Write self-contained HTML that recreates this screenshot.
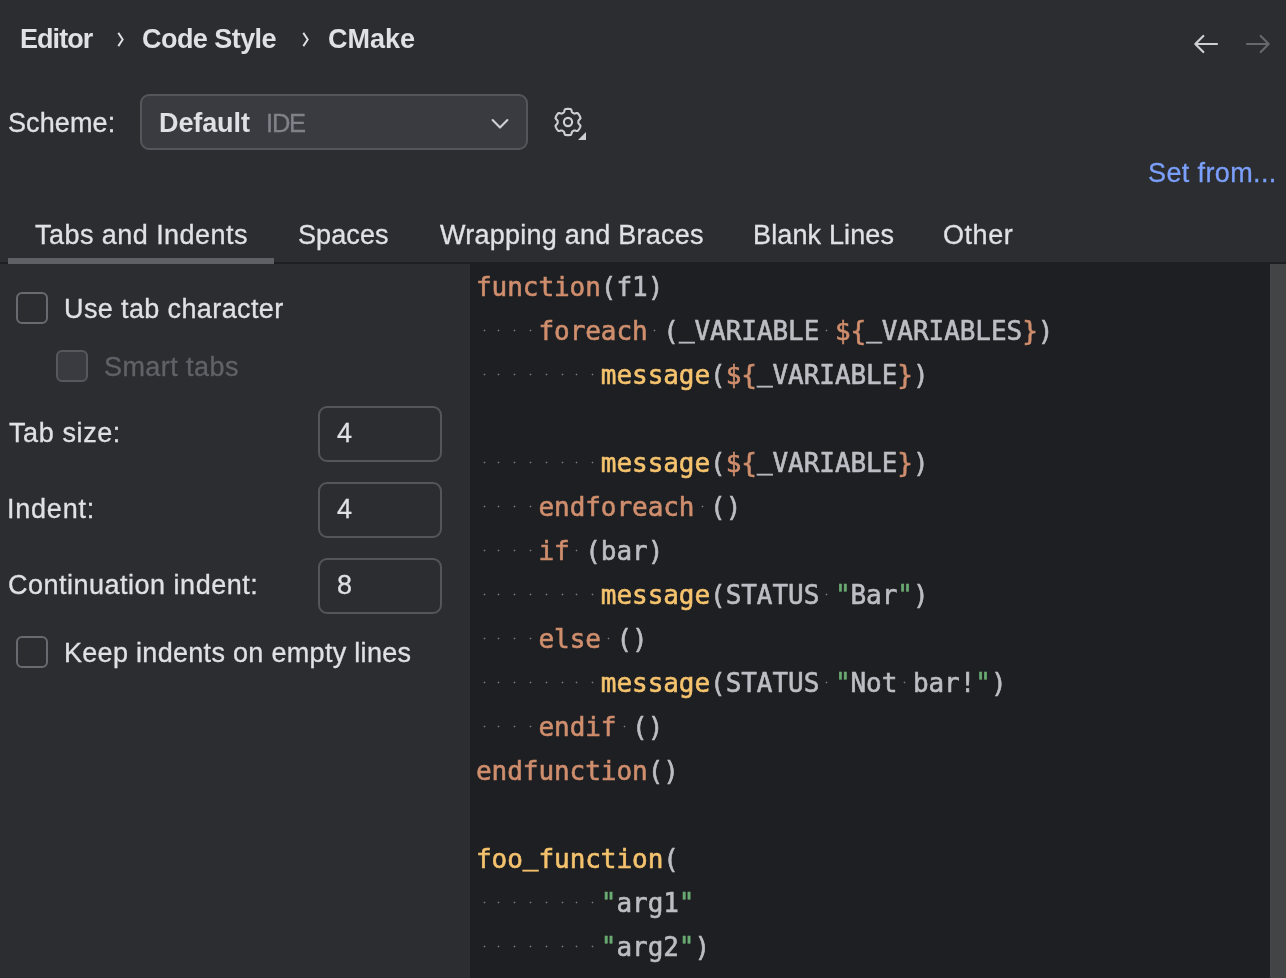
<!DOCTYPE html>
<html lang="en"><head><meta charset="utf-8"><title>Settings - Editor - Code Style - CMake</title>
<style>
html,body{margin:0;padding:0}
body{width:1286px;height:978px;overflow:hidden;background:#2B2D30;position:relative;font-family:"Liberation Sans",sans-serif;color:#DFE1E5}
.t{position:absolute;display:block;text-decoration:none;white-space:pre;line-height:1;margin:0;will-change:transform;-webkit-text-stroke:0.3px currentColor}
.abs{position:absolute}
#editor{position:absolute;left:470px;top:264px;width:816px;height:714px;background:#1E1F22;overflow:hidden}
#hline{position:absolute;left:0;top:262px;width:1286px;height:2px;background:#1E1F22}
#tabline{position:absolute;left:8px;top:258px;width:266px;height:6px;background:#5E6066}
#thumb{position:absolute;left:1270px;top:264px;width:16px;height:714px;background:#434446}
.cb{position:absolute;width:28px;height:28px;border:2px solid #676A70;border-radius:6px;box-sizing:content-box}
.cb.dis{border-color:#56585E;background:#393B40}
.in{position:absolute;width:120px;height:52px;border:2px solid #53565B;border-radius:9px}
#combo{position:absolute;left:140px;top:94px;width:384px;height:52px;border:2px solid #53565B;border-radius:9px;background:#393B40}
pre.ln{position:absolute;left:5.5px;margin:0;font-family:"DejaVu Sans Mono","Liberation Mono",monospace;font-size:26px;line-height:44px;height:44px;white-space:pre;color:#BCBEC4;letter-spacing:-0.05px;will-change:transform;-webkit-text-stroke:0.6px currentColor}
.k{color:#CF8E6D} .f{color:#F5C36E} .s{color:#6AAB73} .d{color:#BCBEC4}
i.dot{position:absolute;width:1px;height:1px;background:#777A82;box-shadow:1px 0 0 rgba(119,122,130,.3),-1px 0 0 rgba(119,122,130,.3),0 1px 0 rgba(119,122,130,.3),0 -1px 0 rgba(119,122,130,.3)}
.u{position:relative;top:-3px}
</style></head><body>
<header>
<span class="t" style="left:20.3px;top:26.14px;font-size:27px;font-weight:bold;-webkit-text-stroke:0;letter-spacing:-0.95px;">Editor</span>
<svg class="abs" style="left:115.2px;top:29px" width="14" height="22" viewBox="0 0 14 22"><path d="M3.3 3.9 L7.7 10.5 L3.3 17.1" fill="none" stroke="#DFE1E5" stroke-width="1.9" stroke-linejoin="miter"/></svg>
<span class="t" style="left:142.3px;top:26.14px;font-size:27px;font-weight:bold;-webkit-text-stroke:0;letter-spacing:-0.55px;">Code Style</span>
<svg class="abs" style="left:300.3px;top:29px" width="14" height="22" viewBox="0 0 14 22"><path d="M3.3 3.9 L7.7 10.5 L3.3 17.1" fill="none" stroke="#DFE1E5" stroke-width="1.9" stroke-linejoin="miter"/></svg>
<span class="t" style="left:328.3px;top:26.14px;font-size:27px;font-weight:bold;-webkit-text-stroke:0;">CMake</span>
<svg class="abs" style="left:1188px;top:30px" width="36" height="28" viewBox="0 0 36 28"><path d="M29 14 H7.3 M15.3 6 L7.3 14 L15.3 22" fill="none" stroke="#CED0D6" stroke-width="2.2" stroke-linecap="round" stroke-linejoin="round"/></svg>
<svg class="abs" style="left:1240px;top:30px" width="36" height="28" viewBox="0 0 36 28"><path d="M7 14 H28.7 M20.7 6 L28.7 14 L20.7 22" fill="none" stroke="#66686C" stroke-width="2.2" stroke-linecap="round" stroke-linejoin="round"/></svg>
</header>
<section>
<label class="t" style="left:8px;top:110.14px;font-size:27px;letter-spacing:0.1px;">Scheme:</label>
<div id="combo"></div>
<span class="t" style="left:159.3px;top:110.14px;font-size:27px;font-weight:bold;-webkit-text-stroke:0;letter-spacing:-0.1px;">Default</span>
<span class="t" style="left:266px;top:111.41px;font-size:25.5px;color:#7F8288;letter-spacing:-1.2px;">IDE</span>
<svg class="abs" style="left:488px;top:112px" width="24" height="20" viewBox="0 0 24 20"><path d="M4.6 8 L12 15.6 L19.4 8" fill="none" stroke="#CED0D6" stroke-width="2.1" stroke-linecap="round" stroke-linejoin="round"/></svg>
<svg class="abs" style="left:548px;top:102px" width="44" height="44" viewBox="0 0 44 44"><path d="M30.35 20.00 L30.34 19.64 L30.34 19.28 L30.39 18.91 L30.58 18.51 L30.95 18.07 L31.46 17.56 L32.00 17.01 L32.39 16.45 L32.49 15.94 L32.36 15.50 L32.19 15.07 L32.01 14.65 L31.82 14.24 L31.61 13.83 L31.39 13.43 L31.15 13.03 L30.90 12.65 L30.64 12.27 L30.36 11.90 L30.07 11.55 L29.76 11.21 L29.27 11.04 L28.59 11.10 L27.84 11.29 L27.14 11.49 L26.58 11.58 L26.14 11.55 L25.79 11.41 L25.48 11.22 L25.18 11.04 L24.86 10.86 L24.54 10.69 L24.25 10.46 L24.00 10.10 L23.80 9.56 L23.62 8.85 L23.41 8.11 L23.12 7.49 L22.73 7.15 L22.28 7.05 L21.83 6.98 L21.37 6.92 L20.92 6.88 L20.46 6.86 L20.00 6.85 L19.54 6.86 L19.08 6.88 L18.63 6.92 L18.17 6.98 L17.72 7.05 L17.27 7.15 L16.88 7.49 L16.59 8.11 L16.38 8.85 L16.20 9.56 L16.00 10.10 L15.75 10.46 L15.46 10.69 L15.14 10.86 L14.83 11.04 L14.52 11.22 L14.21 11.41 L13.86 11.55 L13.42 11.58 L12.86 11.49 L12.16 11.29 L11.41 11.10 L10.73 11.04 L10.24 11.21 L9.93 11.55 L9.64 11.90 L9.36 12.27 L9.10 12.65 L8.85 13.03 L8.61 13.43 L8.39 13.83 L8.18 14.24 L7.99 14.65 L7.81 15.07 L7.64 15.50 L7.51 15.94 L7.61 16.45 L8.00 17.01 L8.54 17.56 L9.05 18.07 L9.42 18.51 L9.61 18.91 L9.66 19.28 L9.66 19.64 L9.65 20.00 L9.66 20.36 L9.66 20.72 L9.61 21.09 L9.42 21.49 L9.05 21.93 L8.54 22.44 L8.00 22.99 L7.61 23.55 L7.51 24.06 L7.64 24.50 L7.81 24.93 L7.99 25.35 L8.18 25.76 L8.39 26.17 L8.61 26.58 L8.85 26.97 L9.10 27.35 L9.36 27.73 L9.64 28.10 L9.93 28.45 L10.24 28.79 L10.73 28.96 L11.41 28.90 L12.16 28.71 L12.86 28.51 L13.42 28.42 L13.86 28.45 L14.21 28.59 L14.52 28.78 L14.82 28.96 L15.14 29.14 L15.46 29.31 L15.75 29.54 L16.00 29.90 L16.20 30.44 L16.38 31.15 L16.59 31.89 L16.88 32.51 L17.27 32.85 L17.72 32.95 L18.17 33.02 L18.63 33.08 L19.08 33.12 L19.54 33.14 L20.00 33.15 L20.46 33.14 L20.92 33.12 L21.37 33.08 L21.83 33.02 L22.28 32.95 L22.73 32.85 L23.12 32.51 L23.41 31.89 L23.62 31.15 L23.80 30.44 L24.00 29.90 L24.25 29.54 L24.54 29.31 L24.86 29.14 L25.18 28.96 L25.48 28.78 L25.79 28.59 L26.14 28.45 L26.58 28.42 L27.14 28.51 L27.84 28.71 L28.59 28.90 L29.27 28.96 L29.76 28.79 L30.07 28.45 L30.36 28.10 L30.64 27.73 L30.90 27.35 L31.15 26.97 L31.39 26.58 L31.61 26.17 L31.82 25.76 L32.01 25.35 L32.19 24.93 L32.36 24.50 L32.49 24.06 L32.39 23.55 L32.00 22.99 L31.46 22.44 L30.95 21.93 L30.58 21.49 L30.39 21.09 L30.34 20.72 L30.34 20.36Z" fill="none" stroke="#CED0D6" stroke-width="2.1" stroke-linejoin="round"/><circle cx="20" cy="20" r="4.1" fill="none" stroke="#CED0D6" stroke-width="2.1"/><path d="M38 30 V38 H30 Z" fill="#CED0D6"/></svg>
<a class="t" style="left:1148px;top:160.14px;font-size:27px;color:#7B9FFA;letter-spacing:0.38px;">Set from...</a>
</section>
<nav>
<span class="t" style="left:35px;top:222.14px;font-size:27px;letter-spacing:0.45px;">Tabs and Indents</span>
<span class="t" style="left:298px;top:222.14px;font-size:27px;letter-spacing:0.1px;">Spaces</span>
<span class="t" style="left:440px;top:222.14px;font-size:27px;letter-spacing:0.24px;">Wrapping and Braces</span>
<span class="t" style="left:752.5px;top:222.14px;font-size:27px;letter-spacing:0.14px;">Blank Lines</span>
<span class="t" style="left:943px;top:222.14px;font-size:27px;letter-spacing:0.55px;">Other</span>
<div id="hline"></div><div id="tabline"></div>
</nav>
<section>
<div class="cb" style="left:16px;top:292px"></div><label class="t" style="left:64px;top:296.14px;font-size:27px;letter-spacing:0.38px;">Use tab character</label>
<div class="cb dis" style="left:56px;top:350px"></div><label class="t" style="left:104px;top:354.14px;font-size:27px;color:#606268;letter-spacing:0.43px;">Smart tabs</label>
<label class="t" style="left:9px;top:420.14px;font-size:27px;letter-spacing:0.6px;">Tab size:</label>
<div class="in" style="left:318px;top:406px"></div><span class="t" style="left:337px;top:420.14px;font-size:27px;">4</span>
<label class="t" style="left:7px;top:496.14px;font-size:27px;letter-spacing:0.78px;">Indent:</label>
<div class="in" style="left:318px;top:482px"></div><span class="t" style="left:337px;top:496.14px;font-size:27px;">4</span>
<label class="t" style="left:8px;top:572.14px;font-size:27px;letter-spacing:0.5px;">Continuation indent:</label>
<div class="in" style="left:318px;top:558px"></div><span class="t" style="left:337px;top:572.14px;font-size:27px;">8</span>
<div class="cb" style="left:16px;top:636px"></div><label class="t" style="left:63.5px;top:640.14px;font-size:27px;letter-spacing:0.3px;">Keep indents on empty lines</label>
</section>
<section id="editor">
<pre class="ln" style="top:1.00px"><span class="k">function</span>(f1)</pre>

<pre class="ln" style="top:45.00px">    <span class="k">foreach</span> (<span class="u">_</span>VARIABLE <span class="k">${</span><span class="u">_</span>VARIABLES<span class="k">}</span>)</pre>
<i class="dot" style="left:14px;top:66px"></i><i class="dot" style="left:28px;top:66px"></i><i class="dot" style="left:44px;top:66px"></i><i class="dot" style="left:60px;top:66px"></i><i class="dot" style="left:184px;top:66px"></i><i class="dot" style="left:356px;top:66px"></i>
<pre class="ln" style="top:89.00px">        <span class="f">message</span>(<span class="k">${</span><span class="u">_</span>VARIABLE<span class="k">}</span>)</pre>
<i class="dot" style="left:14px;top:110px"></i><i class="dot" style="left:28px;top:110px"></i><i class="dot" style="left:44px;top:110px"></i><i class="dot" style="left:60px;top:110px"></i><i class="dot" style="left:76px;top:110px"></i><i class="dot" style="left:92px;top:110px"></i><i class="dot" style="left:106px;top:110px"></i><i class="dot" style="left:122px;top:110px"></i>
<pre class="ln" style="top:177.00px">        <span class="f">message</span>(<span class="k">${</span><span class="u">_</span>VARIABLE<span class="k">}</span>)</pre>
<i class="dot" style="left:14px;top:198px"></i><i class="dot" style="left:28px;top:198px"></i><i class="dot" style="left:44px;top:198px"></i><i class="dot" style="left:60px;top:198px"></i><i class="dot" style="left:76px;top:198px"></i><i class="dot" style="left:92px;top:198px"></i><i class="dot" style="left:106px;top:198px"></i><i class="dot" style="left:122px;top:198px"></i>
<pre class="ln" style="top:221.00px">    <span class="k">endforeach</span> ()</pre>
<i class="dot" style="left:14px;top:242px"></i><i class="dot" style="left:28px;top:242px"></i><i class="dot" style="left:44px;top:242px"></i><i class="dot" style="left:60px;top:242px"></i><i class="dot" style="left:232px;top:242px"></i>
<pre class="ln" style="top:265.00px">    <span class="k">if</span> (bar)</pre>
<i class="dot" style="left:14px;top:286px"></i><i class="dot" style="left:28px;top:286px"></i><i class="dot" style="left:44px;top:286px"></i><i class="dot" style="left:60px;top:286px"></i><i class="dot" style="left:106px;top:286px"></i>
<pre class="ln" style="top:309.00px">        <span class="f">message</span>(STATUS <span class="s">&quot;</span>Bar<span class="s">&quot;</span>)</pre>
<i class="dot" style="left:14px;top:330px"></i><i class="dot" style="left:28px;top:330px"></i><i class="dot" style="left:44px;top:330px"></i><i class="dot" style="left:60px;top:330px"></i><i class="dot" style="left:76px;top:330px"></i><i class="dot" style="left:92px;top:330px"></i><i class="dot" style="left:106px;top:330px"></i><i class="dot" style="left:122px;top:330px"></i><i class="dot" style="left:356px;top:330px"></i>
<pre class="ln" style="top:353.00px">    <span class="k">else</span> ()</pre>
<i class="dot" style="left:14px;top:374px"></i><i class="dot" style="left:28px;top:374px"></i><i class="dot" style="left:44px;top:374px"></i><i class="dot" style="left:60px;top:374px"></i><i class="dot" style="left:138px;top:374px"></i>
<pre class="ln" style="top:397.00px">        <span class="f">message</span>(STATUS <span class="s">&quot;</span>Not bar!<span class="s">&quot;</span>)</pre>
<i class="dot" style="left:14px;top:418px"></i><i class="dot" style="left:28px;top:418px"></i><i class="dot" style="left:44px;top:418px"></i><i class="dot" style="left:60px;top:418px"></i><i class="dot" style="left:76px;top:418px"></i><i class="dot" style="left:92px;top:418px"></i><i class="dot" style="left:106px;top:418px"></i><i class="dot" style="left:122px;top:418px"></i><i class="dot" style="left:356px;top:418px"></i><i class="dot" style="left:434px;top:418px"></i>
<pre class="ln" style="top:441.00px">    <span class="k">endif</span> ()</pre>
<i class="dot" style="left:14px;top:462px"></i><i class="dot" style="left:28px;top:462px"></i><i class="dot" style="left:44px;top:462px"></i><i class="dot" style="left:60px;top:462px"></i><i class="dot" style="left:154px;top:462px"></i>
<pre class="ln" style="top:485.00px"><span class="k">endfunction</span>()</pre>

<pre class="ln" style="top:573.00px"><span class="f">foo<span class="u">_</span>function</span>(</pre>

<pre class="ln" style="top:617.00px">        <span class="s">&quot;</span>arg1<span class="s">&quot;</span></pre>
<i class="dot" style="left:14px;top:638px"></i><i class="dot" style="left:28px;top:638px"></i><i class="dot" style="left:44px;top:638px"></i><i class="dot" style="left:60px;top:638px"></i><i class="dot" style="left:76px;top:638px"></i><i class="dot" style="left:92px;top:638px"></i><i class="dot" style="left:106px;top:638px"></i><i class="dot" style="left:122px;top:638px"></i>
<pre class="ln" style="top:661.00px">        <span class="s">&quot;</span>arg2<span class="s">&quot;</span>)</pre>
<i class="dot" style="left:14px;top:682px"></i><i class="dot" style="left:28px;top:682px"></i><i class="dot" style="left:44px;top:682px"></i><i class="dot" style="left:60px;top:682px"></i><i class="dot" style="left:76px;top:682px"></i><i class="dot" style="left:92px;top:682px"></i><i class="dot" style="left:106px;top:682px"></i><i class="dot" style="left:122px;top:682px"></i>
</section>
<div id="thumb"></div>
</body></html>
